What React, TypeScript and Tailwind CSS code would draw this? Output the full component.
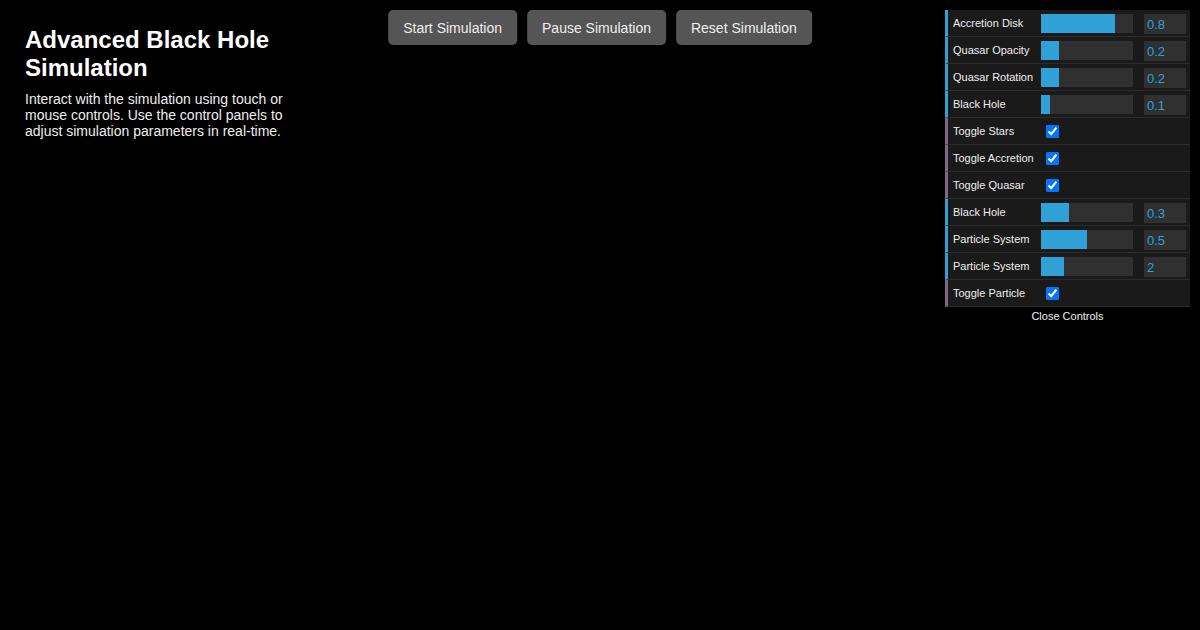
import React, { useState } from 'react';

type Control =
  | { kind: 'number'; label: string; value: number; min: number; max: number }
  | { kind: 'boolean'; label: string; value: boolean };

const controls: Control[] = [
  { kind: 'number', label: 'Accretion Disk', value: 0.8, min: 0, max: 1 },
  { kind: 'number', label: 'Quasar Opacity', value: 0.2, min: 0, max: 1 },
  { kind: 'number', label: 'Quasar Rotation', value: 0.2, min: 0, max: 1 },
  { kind: 'number', label: 'Black Hole', value: 0.1, min: 0, max: 1 },
  { kind: 'boolean', label: 'Toggle Stars', value: true },
  { kind: 'boolean', label: 'Toggle Accretion', value: true },
  { kind: 'boolean', label: 'Toggle Quasar', value: true },
  { kind: 'number', label: 'Black Hole', value: 0.3, min: 0, max: 1 },
  { kind: 'number', label: 'Particle System', value: 0.5, min: 0, max: 1 },
  { kind: 'number', label: 'Particle System', value: 2, min: 0, max: 8 },
  { kind: 'boolean', label: 'Toggle Particle', value: true },
];

const font = { fontFamily: '"Liberation Sans", Arial, sans-serif' };

const ControlRow: React.FC<{ control: Control }> = ({ control }) => {
  const [checked, setChecked] = useState(control.kind === 'boolean' ? control.value : false);

  if (control.kind === 'boolean') {
    return (
      <li className="flex h-[27px] items-center border-b border-l-[3px] border-b-[#2c2c2c] border-l-[#806787] bg-[#1a1a1a] pl-[5px] pr-[4px]">
        <span className="w-[88px] shrink-0 truncate text-[11px] text-[#eee]">{control.label}</span>
        <input
          type="checkbox"
          checked={checked}
          onChange={(e) => setChecked(e.target.checked)}
          className="m-0 ml-[5px] h-[13px] w-[13px]"
        />
      </li>
    );
  }

  // fill width taken from the value
  const pct = ((control.value - control.min) / (control.max - control.min)) * 100;

  return (
    <li className="flex h-[27px] items-center border-b border-l-[3px] border-b-[#2c2c2c] border-l-[#2fa1d6] bg-[#1a1a1a] pl-[5px] pr-[4px]">
      <span className="w-[88px] shrink-0 truncate text-[11px] text-[#eee]">{control.label}</span>
      <div className="h-[19px] w-[92px] shrink-0 bg-[#303030]">
        <div className="h-full bg-[#2fa1d6]" style={{ width: `${pct}%` }} />
      </div>
      <div className="ml-[11px] mt-[2px] flex h-[20px] w-[42px] shrink-0 items-center bg-[#303030] pl-[3px] pt-[1px] text-[13px] text-[#2fa1d6]">
        {control.value}
      </div>
    </li>
  );
};

const App: React.FC = () => {
  return (
    <div className="relative h-[630px] w-full overflow-hidden bg-black text-white" style={font}>
      <div className="w-[305px] pl-[25px] pt-[26px]">
        <h1 className="mb-[9px] text-[24px] font-bold leading-[28px]">Advanced Black Hole Simulation</h1>
        <p className="text-[14px] leading-[16px] text-[#eee]">
          Interact with the simulation using touch or mouse controls. Use the control panels to adjust
          simulation parameters in real-time.
        </p>
      </div>

      <div className="absolute left-1/2 top-[10px] flex -translate-x-1/2 gap-[10px]">
        {['Start Simulation', 'Pause Simulation', 'Reset Simulation'].map((label) => (
          <button
            key={label}
            className="flex h-[35px] items-center rounded-[5px] bg-[#555] px-[15px] pt-[1px] text-[14px] text-[#eee]"
          >
            {label}
          </button>
        ))}
      </div>

      <div className="absolute right-[10px] top-[10px] w-[245px]">
        <ul>
          {controls.map((c, i) => (
            <ControlRow key={i} control={c} />
          ))}
        </ul>
        <div className="h-[19px] text-center text-[11px] leading-[19px] text-[#eee]">Close Controls</div>
      </div>
    </div>
  );
};

export default App;
